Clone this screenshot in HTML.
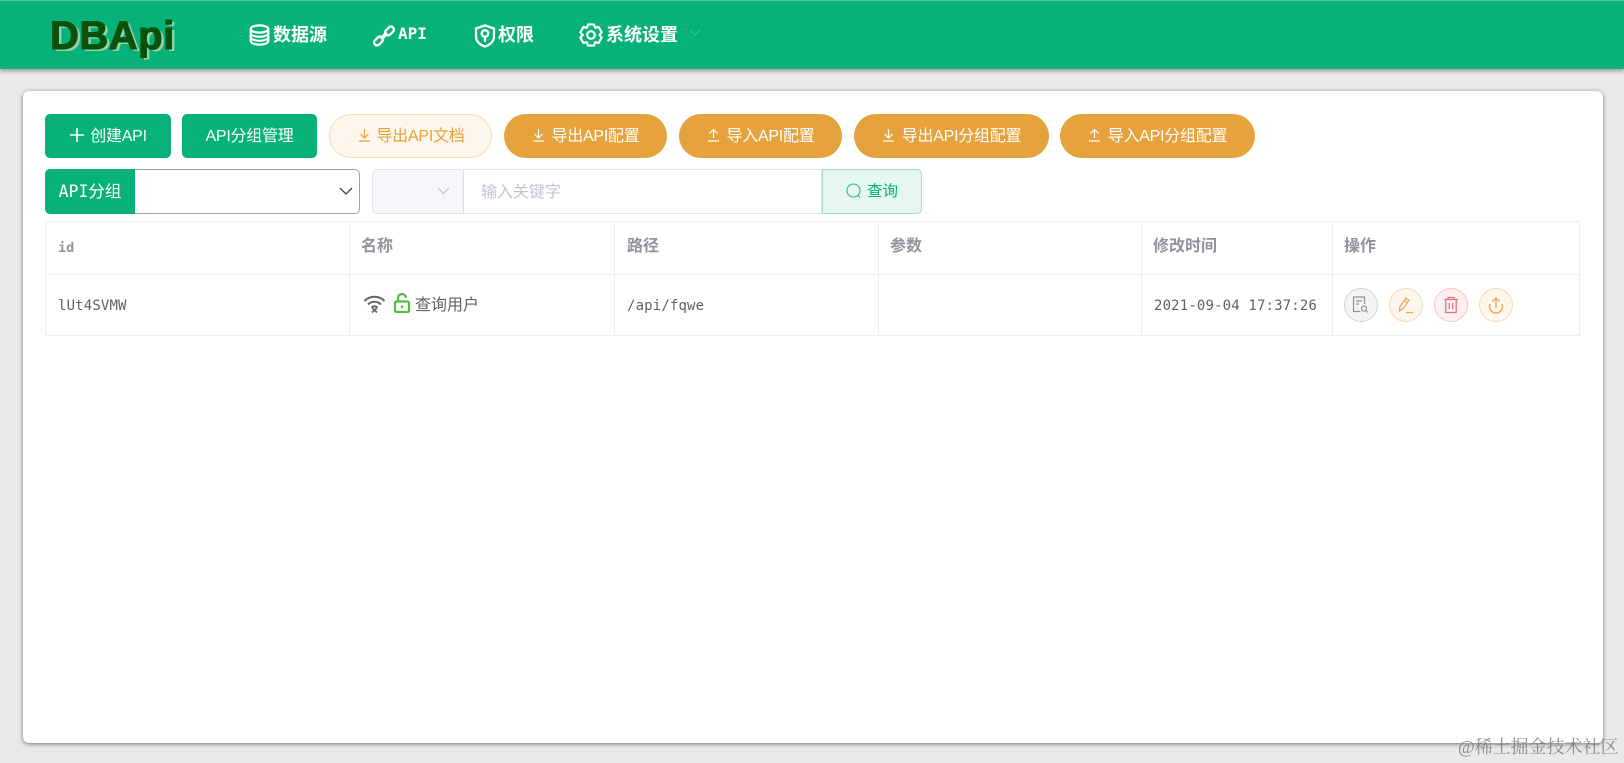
<!DOCTYPE html>
<html><head><meta charset="utf-8"><style>
html,body{margin:0;padding:0;width:1624px;height:763px;overflow:hidden;background:#e9e9e9;font-family:"Liberation Sans","Noto Sans CJK SC",sans-serif}
.a{position:absolute;white-space:nowrap}
.hdr{left:0;top:0;width:1624px;height:69px;background:#06b17a;border-top:1px solid #5cc5a0;box-sizing:border-box;box-shadow:0 2px 4px rgba(0,0,0,.35)}
.card{left:23px;top:91px;width:1580px;height:652px;background:#fff;border-radius:6px;box-shadow:0 1px 4px rgba(0,0,0,.5)}
.nav{color:#fff;font-weight:700;font-size:18px;line-height:24px;top:23px}
.btn{top:114px;height:44px;line-height:45px;box-sizing:border-box;font-size:16px;color:#fff;text-align:center;letter-spacing:-.25px}
.g{background:#06b17a;border-radius:5px}
.o{background:#e6a23c;border-radius:22px}
.ol{background:#fdf6ec;border:1px solid #f5dab1;color:#e6a23c;border-radius:22px;line-height:43px}
.mono{font-family:"DejaVu Sans Mono","Noto Sans CJK SC",monospace}
.th{top:235px;font-size:16px;line-height:24px;color:#909399;font-weight:700}
.td{top:294px;font-size:14px;line-height:24px;color:#606266;letter-spacing:.15px}
.ln{background:#ebeef5}
.c{width:34px;height:34px;border-radius:50%;box-sizing:border-box;top:288px}
svg{position:absolute;fill:none}
</style></head><body>
<div class="a hdr"></div>
<div class="a" style="left:50px;top:13px;font-size:40px;line-height:46px;font-weight:700;color:#0a520c;letter-spacing:.5px;-webkit-text-stroke:1.100px #0a520c;text-shadow:3px 2px 0 #8fd0ad">DBApi</div>

<svg style="left:249px;top:24px" width="21" height="22" viewBox="0 0 21 22" stroke="#fff" stroke-width="2.200"><ellipse cx="10.500" cy="5" rx="8.800" ry="3.600"/><path d="M1.700 5v12c0 2 3.900 3.700 8.800 3.700s8.800-1.700 8.800-3.700V5M1.700 9.200c0 2 3.900 3.600 8.800 3.600s8.800-1.600 8.800-3.600M1.700 13.200c0 2 3.900 3.600 8.800 3.600s8.800-1.600 8.800-3.600"/></svg>
<div class="a nav" style="left:273px">数据源</div>
<svg style="left:372px;top:24px" width="24" height="24" viewBox="0 0 24 24" stroke="#fff" stroke-width="2.400"><rect x="1.500" y="14" width="10" height="6" rx="3" transform="rotate(-45 6.500 17)"/><rect x="12.500" y="4" width="10" height="6" rx="3" transform="rotate(-45 17.500 7)"/><path d="M9 15l6-6" stroke-width="4"/></svg>
<div class="a nav mono" style="left:398px;font-size:16px;top:22px">API</div>
<svg style="left:474px;top:24px" width="22" height="24" viewBox="0 0 22 24" stroke="#fff" stroke-width="2.300"><path d="M11 1.500L20 4.500v8c0 5-4 8.500-9 10-5-1.500-9-5-9-10v-8z"/><circle cx="11" cy="9.500" r="3.300"/><path d="M11 13v5"/></svg>
<div class="a nav" style="left:498px">权限</div>
<svg style="left:579px;top:23px" width="24" height="24" viewBox="0 0 24 24" stroke="#fff" stroke-width="2.200" stroke-linejoin="round"><circle cx="12" cy="12" r="3.800"/><path d="M8.970 1.430L15.030 1.430 16.150 4.810 19.640 4.090 22.670 9.340 20.300 12 22.670 14.660 19.640 19.910 16.150 19.190 15.030 22.570 8.970 22.570 7.850 19.190 4.360 19.910 1.330 14.660 3.700 12 1.330 9.340 4.360 4.090 7.850 4.810z"/></svg>
<div class="a nav" style="left:606px">系统设置</div>
<svg style="left:689px;top:29px" width="12" height="8" viewBox="0 0 12 8" stroke="#3fc096" stroke-width="1"><path d="M1 1l5 5 5-5"/></svg>

<div class="a card"></div>

<div class="a btn g" style="left:45px;width:126px;padding-left:21px">创建API</div>
<svg style="left:70px;top:128px" width="14" height="14" viewBox="0 0 14 14" stroke="#fff" stroke-width="1.600"><path d="M7 0v14M0 7h14"/></svg>
<div class="a btn g" style="left:182px;width:135px">API分组管理</div>
<div class="a btn ol" style="left:329px;width:163px;padding-left:20px">导出API文档</div>
<svg style="left:358px;top:128px" width="13" height="14" viewBox="0 0 13 14" stroke="#e6a23c" stroke-width="1.200"><path d="M6.500 1v8.500M2.500 6l4 4 4-4M1 13h11"/></svg>
<div class="a btn o" style="left:504px;width:163px;padding-left:20px">导出API配置</div>
<svg style="left:532px;top:128px" width="13" height="14" viewBox="0 0 13 14" stroke="#fff" stroke-width="1.200"><path d="M6.500 1v8.500M2.500 6l4 4 4-4M1 13h11"/></svg>
<div class="a btn o" style="left:679px;width:163px;padding-left:20px">导入API配置</div>
<svg style="left:707px;top:128px" width="13" height="14" viewBox="0 0 13 14" stroke="#fff" stroke-width="1.200"><path d="M6.500 10V1.500M2.500 5.500l4-4 4 4M1 13h11"/></svg>
<div class="a btn o" style="left:854px;width:195px;padding-left:20px">导出API分组配置</div>
<svg style="left:882px;top:128px" width="13" height="14" viewBox="0 0 13 14" stroke="#fff" stroke-width="1.200"><path d="M6.500 1v8.500M2.500 6l4 4 4-4M1 13h11"/></svg>
<div class="a btn o" style="left:1060px;width:195px;padding-left:20px">导入API分组配置</div>
<svg style="left:1088px;top:128px" width="13" height="14" viewBox="0 0 13 14" stroke="#fff" stroke-width="1.200"><path d="M6.500 10V1.500M2.500 5.500l4-4 4 4M1 13h11"/></svg>

<div class="a" style="left:45px;top:169px;width:315px;height:45px;box-sizing:border-box;border:1px solid #a0a0a0;border-radius:5px;background:#fff"></div>
<div class="a mono" style="left:45px;top:169px;width:90px;height:45px;background:#06b17a;border-radius:5px 0 0 5px;color:#fff;font-size:16.500px;line-height:46px;text-align:center">API分组</div>
<svg style="left:339px;top:187px" width="14" height="9" viewBox="0 0 14 9" stroke="#444" stroke-width="1.300"><path d="M1 1l6 6 6-6"/></svg>

<div class="a" style="left:372px;top:169px;width:450px;height:45px;box-sizing:border-box;border:1px solid #e2e4ea;border-radius:5px 0 0 5px;background:#fff"></div>
<div class="a" style="left:373px;top:170px;width:91px;height:43px;box-sizing:border-box;background:#f5f7fa;border-right:1px solid #dcdfe6;border-radius:4px 0 0 4px"></div>
<svg style="left:437px;top:187px" width="13" height="8" viewBox="0 0 13 8" stroke="#c0c4cc" stroke-width="1.200"><path d="M1 1l5.500 5.500L12 1"/></svg>
<div class="a" style="left:481px;top:181px;font-size:16px;line-height:24px;color:#c0c4cc">输入关键字</div>
<div class="a" style="left:822px;top:169px;width:100px;height:45px;box-sizing:border-box;border:1px solid #9cdfc8;border-radius:0 5px 5px 0;background:#e6f7f1"></div>
<svg style="left:846px;top:183px" width="16" height="17" viewBox="0 0 16 17" stroke="#2ab98a" stroke-width="1.100"><circle cx="7.500" cy="7.500" r="6.500"/><path d="M12 12.500l2 2"/></svg>
<div class="a" style="left:867px;top:180px;font-size:15.500px;line-height:24px;color:#06b17a">查询</div>

<div class="a ln" style="left:45px;top:221px;width:1535px;height:1px"></div>
<div class="a ln" style="left:45px;top:274px;width:1535px;height:1px"></div>
<div class="a ln" style="left:45px;top:335px;width:1535px;height:1px"></div>
<div class="a ln" style="left:45px;top:221px;width:1px;height:115px"></div>
<div class="a ln" style="left:349px;top:221px;width:1px;height:115px"></div>
<div class="a ln" style="left:614px;top:221px;width:1px;height:115px"></div>
<div class="a ln" style="left:878px;top:221px;width:1px;height:115px"></div>
<div class="a ln" style="left:1141px;top:221px;width:1px;height:115px"></div>
<div class="a ln" style="left:1332px;top:221px;width:1px;height:115px"></div>
<div class="a ln" style="left:1579px;top:221px;width:1px;height:115px"></div>

<div class="a th mono" style="left:58px;font-size:13.500px;top:236px">id</div>
<div class="a th" style="left:361px">名称</div>
<div class="a th" style="left:627px">路径</div>
<div class="a th" style="left:890px">参数</div>
<div class="a th" style="left:1153px">修改时间</div>
<div class="a th" style="left:1344px">操作</div>

<div class="a td mono" style="left:58px">lUt4SVMW</div>
<svg style="left:363px;top:295px" width="23" height="18" viewBox="0 0 23 18" stroke="#666" stroke-width="2"><path d="M1.500 6a14 14 0 0 1 20 0M5 9.500a9 9 0 0 1 13 0M8.500 12.500a4.500 4.500 0 0 1 6 0"/><path d="M9 13l5 4.500M14 13l-5 4.500" stroke-width="1.700"/></svg>
<svg style="left:393px;top:293px" width="18" height="20" viewBox="0 0 18 20" stroke="#4fc13e" stroke-width="2.200"><rect x="2" y="8.500" width="14" height="10.500" rx="1.500"/><path d="M5 8.500V5a4 4 0 0 1 8 0"/><path d="M9 12.500v2.500"/></svg>
<div class="a" style="left:415px;top:294px;font-size:16px;line-height:24px;color:#606266">查询用户</div>
<div class="a td mono" style="left:627px">/api/fqwe</div>
<div class="a td mono" style="left:1154px">2021-09-04 17:37:26</div>

<div class="a c" style="left:1344px;background:#f4f4f5;border:1px solid #d3d4d6"></div>
<svg style="left:1352px;top:296px" width="18" height="18" viewBox="0 0 18 18" stroke="#909399" stroke-width="1.200"><path d="M8.500 15.500H1.500V1h11v7M4 5h6M4 8h3"/><circle cx="12" cy="12.500" r="2.500"/><path d="M14 14.500l2 2"/></svg>
<div class="a c" style="left:1389px;background:#fdf6ec;border:1px solid #f5dab1"></div>
<svg style="left:1397px;top:296px" width="18" height="18" viewBox="0 0 18 18" stroke="#e9a550" stroke-width="1.200"><path d="M2.500 15L3 10.500 9 2l3 2.200-6 8.500zM7.500 4.500l3 2.200M9 16.500h7"/></svg>
<div class="a c" style="left:1434px;background:#fef0f0;border:1px solid #fbc4c4"></div>
<svg style="left:1443px;top:296px" width="16" height="18" viewBox="0 0 16 18" stroke="#e4707c" stroke-width="1.300"><path d="M1 3.500h14M5 3.500V1.500h6v2M2.800 3.500V16.500h10.400V3.500M6.300 7v6M9.700 7v6"/></svg>
<div class="a c" style="left:1479px;background:#fdf6ec;border:1px solid #f5dab1"></div>
<svg style="left:1487px;top:296px" width="18" height="18" viewBox="0 0 18 18" stroke="#e9a550" stroke-width="1.300"><path d="M9 12V2M5.500 5.500L9 2l3.500 3.500M3 8a6.500 6.500 0 1 0 12 0"/></svg>

<div class="a" style="left:1458px;top:735px;font-family:'Liberation Serif','Noto Serif CJK SC',serif;font-size:18px;line-height:24px;color:rgba(110,110,110,.75)">@稀土掘金技术社区</div>
</body></html>
